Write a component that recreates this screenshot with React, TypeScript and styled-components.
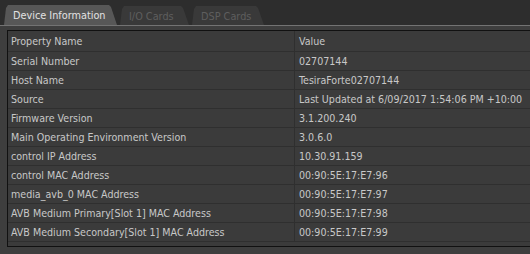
import React from "react";
import styled, { createGlobalStyle } from "styled-components";

const Global = createGlobalStyle`
  html, body { margin: 0; padding: 0; background: #2d2d2d; }
  body { width: 530px; height: 254px; overflow: hidden; font-family: "DejaVu Sans Condensed", "DejaVu Sans", sans-serif; }
`;

const Frame = styled.div`
  width: 530px;
  height: 254px;
  display: flex;
  flex-direction: column;
  background: #2d2d2d;
  overflow: hidden;
`;

const TabBar = styled.div`
  height: 25px;
  display: flex;
  align-items: flex-end;
  gap: 3px;
  padding-left: 4px;
  box-sizing: border-box;
`;

const Tab = styled.div<{ $active?: boolean; $w: number }>`
  width: ${(p) => p.$w}px;
  height: ${(p) => (p.$active ? 20 : 19)}px;
  box-sizing: border-box;
  display: flex;
  align-items: center;
  padding-left: 9px;
  padding-top: 1px;
  font-size: 10.8px;
  color: ${(p) => (p.$active ? "#e2e2e2" : "#5e5e5e")};
  background: ${(p) => (p.$active ? "#575757" : "#393939")};
  clip-path: polygon(0 100%, 2px 3px, 4px 0, calc(100% - 8px) 0, calc(100% - 6px) 2px, 100% 100%);
  white-space: nowrap;
`;

const Panel = styled.div`
  flex: 1;
  border-top: 1px solid #737373;
  background: #3e3e3e;
  padding: 4px 0 7px 7px;
  display: flex;
  flex-direction: column;
  min-height: 0;
`;

const Table = styled.div`
  flex: 1;
  border-top: 1px solid #111;
  border-left: 1px solid #111;
  border-bottom: 1px solid #111;
  background: #3b3b3b;
  display: flex;
  flex-direction: column;
`;

const Row = styled.div<{ $header?: boolean }>`
  display: grid;
  grid-template-columns: 287px 1fr;
  height: ${(p) => (p.$header ? 20 : 18)}px;
  border-bottom: 1px solid #2f2f2f;
  box-sizing: content-box;
`;

const Cell = styled.div<{ $first?: boolean }>`
  display: flex;
  align-items: center;
  padding-left: ${(p) => (p.$first ? 3 : 4)}px;
  font-size: 10.6px;
  color: #c8c8c8;
  white-space: nowrap;
  overflow: hidden;
  border-right: ${(p) => (p.$first ? "1px solid #2f2f2f" : "none")};
`;

const rows: [string, string][] = [
  ["Serial Number", "02707144"],
  ["Host Name", "TesiraForte02707144"],
  ["Source", "Last Updated at 6/09/2017 1:54:06 PM +10:00"],
  ["Firmware Version", "3.1.200.240"],
  ["Main Operating Environment Version", "3.0.6.0"],
  ["control IP Address", "10.30.91.159"],
  ["control MAC Address", "00:90:5E:17:E7:96"],
  ["media_avb_0 MAC Address", "00:90:5E:17:E7:97"],
  ["AVB Medium Primary[Slot 1] MAC Address", "00:90:5E:17:E7:98"],
  ["AVB Medium Secondary[Slot 1] MAC Address", "00:90:5E:17:E7:99"],
];

export default function App() {
  return (
    <Frame>
      <Global />
      <TabBar>
        <Tab $active $w={113}>Device Information</Tab>
        <Tab $w={69}>I/O Cards</Tab>
        <Tab $w={72}>DSP Cards</Tab>
      </TabBar>
      <Panel>
        <Table>
          <Row $header>
            <Cell $first>Property Name</Cell>
            <Cell>Value</Cell>
          </Row>
          {rows.map(([k, v]) => (
            <Row key={k}>
              <Cell $first>{k}</Cell>
              <Cell>{v}</Cell>
            </Row>
          ))}
        </Table>
      </Panel>
    </Frame>
  );
}
